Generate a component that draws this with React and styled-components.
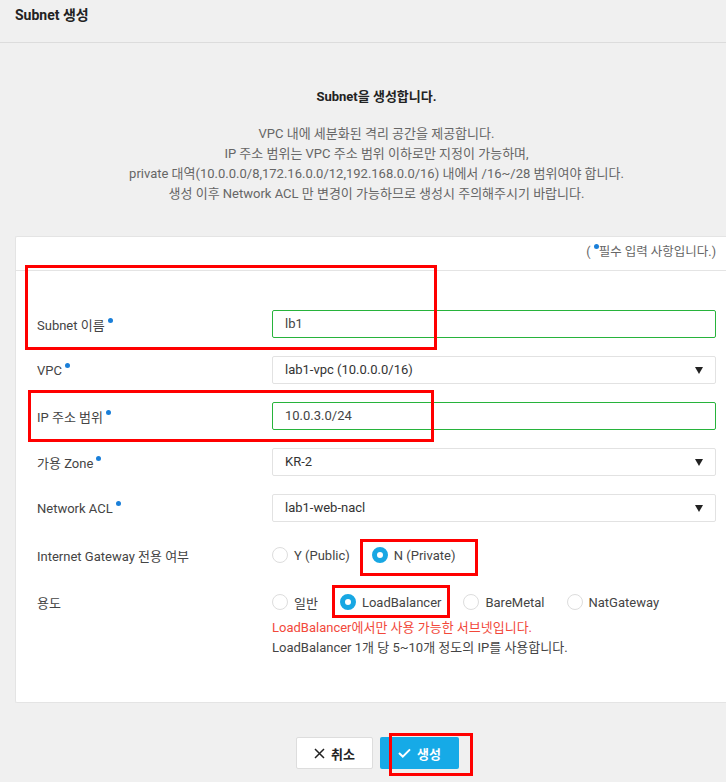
import styled, { createGlobalStyle } from "styled-components";

const GlobalStyle = createGlobalStyle`
  html, body {
    margin: 0;
    padding: 0;
    background: #f0f0f0;
    font-family: Roboto, "Noto Sans CJK KR", sans-serif;
    color: #444;
    overflow: hidden;
  }
`;

const fields = [
  { label: "Subnet 이름", type: "input", value: "lb1", mark: { top: -45, left: -12, w: 412, h: 85 } },
  { label: "VPC", type: "select", value: "lab1-vpc (10.0.0.0/16)" },
  { label: "IP 주소 범위", type: "input", value: "10.0.3.0/24", mark: { top: -12, left: -9, w: 406, h: 52 } },
  { label: "가용 Zone", type: "select", value: "KR-2" },
  { label: "Network ACL", type: "select", value: "lab1-web-nacl" },
];

const App = () => {
  return (
    <Page>
      <GlobalStyle />
      <Header>Subnet 생성</Header>
      <Intro>
        <IntroTitle>Subnet을 생성합니다.</IntroTitle>
        <IntroText>
          VPC 내에 세분화된 격리 공간을 제공합니다.<br />
          IP 주소 범위는 VPC 주소 범위 이하로만 지정이 가능하며,<br />
          private 대역(10.0.0.0/8,172.16.0.0/12,192.168.0.0/16) 내에서 /16~/28 범위여야 합니다.<br />
          생성 이후 Network ACL 만 변경이 가능하므로 생성시 주의해주시기 바랍니다.
        </IntroText>
      </Intro>

      <Card>
        <CardHead>
          (<Dot />필수 입력 사항입니다.)
        </CardHead>
        <CardBody>
          {fields.map((f) => (
            <Row key={f.label}>
              <Label>
                {f.label}
                <Dot />
              </Label>
              {f.type === "input" ? (
                <TextBox>{f.value}</TextBox>
              ) : (
                <SelectBox>
                  {f.value}
                  <Caret />
                </SelectBox>
              )}
              {f.mark && <Mark $top={f.mark.top} $left={f.mark.left} $w={f.mark.w} $h={f.mark.h} />}
            </Row>
          ))}

          <RadioRow>
            <Label>Internet Gateway 전용 여부</Label>
            <Options>
              <Option>
                <Radio />Y (Public)
              </Option>
              <Option>
                <Radio $on />N (Private)
                <Mark $top={-8} $left={-12} $w={118} $h={37} />
              </Option>
            </Options>
          </RadioRow>

          <RadioRow $last>
            <Label>용도</Label>
            <Options>
              <Option>
                <Radio />일반
              </Option>
              <Option>
                <Radio $on />LoadBalancer
                <Mark $top={-9} $left={-8} $w={118} $h={33} />
              </Option>
              <Option>
                <Radio />BareMetal
              </Option>
              <Option>
                <Radio />NatGateway
              </Option>
            </Options>
          </RadioRow>
          <Notes>
            <Warn>LoadBalancer에서만 사용 가능한 서브넷입니다.</Warn>
            <div>LoadBalancer 1개 당 5~10개 정도의 IP를 사용합니다.</div>
          </Notes>
        </CardBody>
      </Card>

      <Buttons>
        <CancelBtn>
          <svg width="11" height="11" viewBox="0 0 11 11">
            <path d="M1 1 L10 10 M10 1 L1 10" stroke="#222" strokeWidth="1.5" />
          </svg>
          취소
        </CancelBtn>
        <SubmitBtn>
          <svg width="13" height="10" viewBox="0 0 13 10">
            <path d="M1 5 L4.8 8.6 L12 1.4" stroke="#fff" strokeWidth="2" fill="none" />
          </svg>
          생성
          <Mark $top={-4} $left={9} $w={84} $h={43} />
        </SubmitBtn>
      </Buttons>
    </Page>
  );
};
export default App;

const Page = styled.div`
  width: 726px;
  height: 782px;
  overflow: hidden;
`;
const Header = styled.div`
  height: 42px;
  line-height: 30px;
  padding: 0 15px;
  font-size: 14px;
  font-weight: 700;
  color: #222;
  border-bottom: 1px solid #dcdcdc;
`;
const Intro = styled.div`
  text-align: center;
  padding: 44px 0 0 27px;
  height: 149px;
  box-sizing: border-box;
  margin-bottom: 44px;
`;
const IntroTitle = styled.div`
  font-size: 13px;
  font-weight: 700;
  color: #222;
  line-height: 20px;
  margin-bottom: 17px;
`;
const IntroText = styled.div`
  font-size: 13px;
  line-height: 20px;
  color: #666;
`;
const Card = styled.div`
  margin-left: 15px;
  background: #fff;
  border: 1px solid #e4e4e4;
  border-right: none;
  border-radius: 2px 0 0 2px;
  height: 467px;
  box-sizing: border-box;
`;
const CardHead = styled.div`
  height: 33px;
  line-height: 30px;
  text-align: right;
  padding-right: 10px;
  font-size: 12.5px;
  color: #666;
  border-bottom: 1px solid #e4e4e4;
`;
const Dot = styled.span`
  display: inline-block;
  width: 5px;
  height: 5px;
  border-radius: 50%;
  background: #1a7fd9;
  vertical-align: 7px;
  margin-left: 3px;
`;
const CardBody = styled.div`
  padding: 39px 10px 0 21px;
`;
const Row = styled.div`
  position: relative;
  display: flex;
  align-items: center;
  margin-bottom: 18px;
`;
const Label = styled.div`
  width: 235px;
  flex-shrink: 0;
  font-size: 13px;
  color: #444;
`;
const Field = styled.div`
  flex: 1;
  height: 28px;
  box-sizing: border-box;
  padding-left: 12px;
  font-size: 13px;
  line-height: 26px;
  color: #444;
  background: #fff;
  border-radius: 2px;
`;
const TextBox = styled(Field)`
  border: 1px solid #27b33b;
`;
const SelectBox = styled(Field)`
  position: relative;
  border: 1px solid #e2e2e2;
  color: #333;
`;
const Caret = styled.span`
  position: absolute;
  right: 12px;
  top: 10px;
  width: 0;
  height: 0;
  border-left: 4px solid transparent;
  border-right: 4px solid transparent;
  border-top: 7px solid #222;
`;
const Mark = styled.span`
  position: absolute;
  top: ${(p) => p.$top}px;
  left: ${(p) => p.$left}px;
  width: ${(p) => p.$w}px;
  height: ${(p) => p.$h}px;
  border: 3px solid #f00;
  box-sizing: border-box;
  pointer-events: none;
`;
const RadioRow = styled.div`
  display: flex;
  align-items: center;
  height: 16px;
  margin-top: ${(p) => (p.$last ? "31px" : "25px")};
`;
const Options = styled.div`
  display: flex;
  align-items: center;
  gap: 22px;
`;
const Option = styled.label`
  position: relative;
  display: flex;
  align-items: center;
  gap: 6px;
  font-size: 13px;
  color: #444;
`;
const Radio = styled.span`
  width: 16px;
  height: 16px;
  box-sizing: border-box;
  border-radius: 50%;
  border: ${(p) => (p.$on ? "5px solid #18a7e3" : "1px solid #ddd")};
  background: #fff;
`;
const Notes = styled.div`
  margin: 8px 0 0 235px;
  font-size: 13px;
  line-height: 20px;
  color: #444;
`;
const Warn = styled.div`
  color: #f2483a;
`;
const Buttons = styled.div`
  display: flex;
  justify-content: center;
  gap: 7px;
  margin-top: 34px;
  padding-left: 29px;
`;
const Btn = styled.button`
  position: relative;
  height: 32px;
  display: flex;
  align-items: center;
  justify-content: center;
  gap: 6px;
  font-family: Roboto, "Noto Sans CJK KR", sans-serif;
  font-size: 13px;
  font-weight: 700;
  border-radius: 2px;
  padding: 0;
`;
const CancelBtn = styled(Btn)`
  width: 77px;
  background: #fff;
  color: #222;
  border: 1px solid #ddd;
`;
const SubmitBtn = styled(Btn)`
  width: 79px;
  background: #16aae7;
  color: #fff;
  border: none;
`;
